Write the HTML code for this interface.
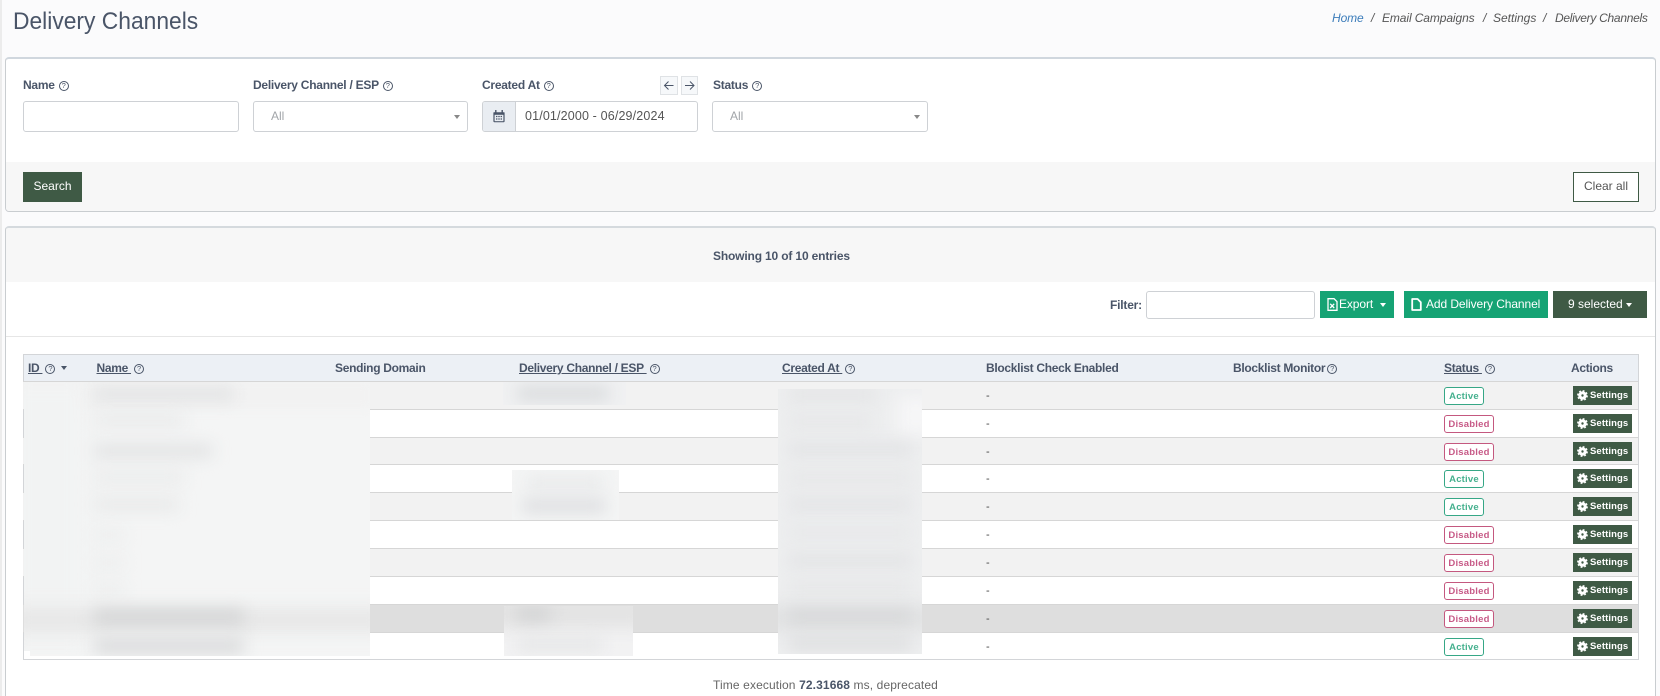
<!DOCTYPE html>
<html lang="en">
<head>
<meta charset="utf-8">
<title>Delivery Channels</title>
<style>
html,body{margin:0;padding:0;width:1660px;height:696px;overflow:hidden;background:#fbfbfc;font-family:"Liberation Sans",sans-serif;color:#4a5568}
*{box-sizing:border-box}
.a{position:absolute}
.t{position:absolute;white-space:nowrap;line-height:16px;height:16px}
.lab{font-weight:bold;font-size:12px;color:#4a5568;top:77px;letter-spacing:-.25px}
.th{font-weight:bold;font-size:12px;color:#4a5568;top:360px;letter-spacing:-.3px}
.th u{text-underline-offset:1px}
.q{display:inline-block;width:10px;height:10px;border:1px solid #4a5568;border-radius:50%;font:normal 7.5px/8px "Liberation Sans",sans-serif;text-align:center;vertical-align:1px;margin-left:4px;letter-spacing:0;text-decoration:none;color:#4a5568}
.th .q{margin-left:3px}
.inp{position:absolute;background:#fff;border:1px solid #ced1d5;border-radius:3px}
.all{font-size:12px;color:#a2a5a9}
.caret{position:absolute;width:0;height:0;border-left:3px solid transparent;border-right:3px solid transparent;border-top:4px solid #888}
.btn{position:absolute;color:#fff;font-size:12px;line-height:27px;text-align:center;white-space:nowrap}
.dk{background:#3f5a45}
.gr{background:#16a374}
.line{position:absolute;left:23px;width:1615px;height:1px;background:#d6d6d6}
.row{position:absolute;left:23px;width:1615px}
.dash{position:absolute;left:986px;font-size:11px;line-height:12px;color:#444}
.bd{position:absolute;left:1444px;height:18px;background:#fff;border-radius:3px;font-size:9.5px;font-weight:bold;line-height:17px;text-align:center;letter-spacing:.2px}
.ac{width:40px;border:1px solid #36a786;color:#45b08e}
.di{width:50px;border:1px solid #c4587f;color:#c75a87}
.st{position:absolute;left:1573px;width:59px;height:19px;background:#3f5a45;color:#fff;font-size:9.5px;font-weight:bold;line-height:20px;white-space:nowrap;padding-left:17px;letter-spacing:.1px}
.st svg{position:absolute;left:4px;top:4px}
.b{position:absolute;filter:blur(8px)}
.ov{position:absolute;overflow:hidden}
</style>
</head>
<body>
<div class="a" style="left:0;top:0;width:2px;height:696px;background:#ececec"></div>

<div class="t" style="left:13px;top:8px;font-size:24px;line-height:28px;height:28px;color:#4a5568;transform:scaleX(.951);transform-origin:left center">Delivery Channels</div>
<div class="t" style="left:1332px;top:10px;font-size:12px;font-style:italic;color:#3b7cba;letter-spacing:-.1px">Home</div>
<div class="t" style="left:1371px;top:10px;font-size:12px;font-style:italic;color:#555">/</div>
<div class="t" style="left:1382px;top:10px;font-size:12px;font-style:italic;color:#555;letter-spacing:-.1px">Email Campaigns</div>
<div class="t" style="left:1483px;top:10px;font-size:12px;font-style:italic;color:#555">/</div>
<div class="t" style="left:1493px;top:10px;font-size:12px;font-style:italic;color:#555">Settings</div>
<div class="t" style="left:1543px;top:10px;font-size:12px;font-style:italic;color:#555">/</div>
<div class="t" style="left:1555px;top:10px;font-size:12px;font-style:italic;color:#555;letter-spacing:-.28px">Delivery Channels</div>

<!-- Search card -->
<div class="a" style="left:5px;top:57px;width:1651px;height:155px;background:#fff;border:1px solid #c9cdd0;border-top:2px solid #d0d7de;border-radius:4px;overflow:hidden">
  <div class="a" style="left:0;top:103px;width:100%;height:50px;background:#f7f7f7"></div>
</div>
<div class="t lab" style="left:23px">Name<span class="q">?</span></div>
<div class="t lab" style="left:253px">Delivery Channel / ESP<span class="q">?</span></div>
<div class="t lab" style="left:482px">Created At<span class="q">?</span></div>
<div class="t lab" style="left:713px">Status<span class="q">?</span></div>

<div class="inp" style="left:23px;top:101px;width:216px;height:31px"></div>
<div class="inp" style="left:253px;top:101px;width:215px;height:31px"></div>
<div class="t all" style="left:271px;top:108px">All</div>
<div class="caret" style="left:454px;top:115px"></div>

<div class="inp" style="left:482px;top:101px;width:216px;height:31px;overflow:hidden"><div class="a" style="left:0;top:0;width:33px;height:29px;background:#e9edf2;border-right:1px solid #ced1d5"></div></div>
<svg class="a" style="left:493px;top:109px" width="12" height="14" viewBox="0 0 12 14"><path d="M1 3.2h10a.6.6 0 0 1 .6.6v8.4a1 1 0 0 1-1 1H1.400a1 1 0 0 1-1-1V3.800a.6.6 0 0 1 .6-.6z" fill="#4a5568"/><rect x="1.600" y="5.800" width="8.800" height="6.400" fill="#e9edf2"/><path d="M2.800 1v3M9.200 1v3" stroke="#4a5568" stroke-width="1.400"/><path d="M3 7.500h1.400M5.300 7.500h1.400M7.600 7.500h1.400M3 10h1.400M5.300 10h1.400M7.600 10h1.400" stroke="#4a5568" stroke-width="1.300"/></svg>
<div class="t" style="left:525px;top:108px;font-size:12.500px;color:#555;letter-spacing:.15px">01/01/2000 - 06/29/2024</div>

<div class="a" style="left:660px;top:76px;width:18px;height:19px;background:#f6f8fa;border:1px solid #dfe2e5"></div>
<div class="a" style="left:681px;top:76px;width:17px;height:19px;background:#f6f8fa;border:1px solid #dfe2e5"></div>
<svg class="a" style="left:663px;top:80px" width="12" height="11" viewBox="0 0 12 11"><path d="M10.500 5.500H1.500M5.500 1.500l-4 4 4 4" fill="none" stroke="#4a5568" stroke-width="1"/></svg>
<svg class="a" style="left:684px;top:80px" width="12" height="11" viewBox="0 0 12 11"><path d="M1 5.500h9M6 1.500l4 4-4 4" fill="none" stroke="#4a5568" stroke-width="1"/></svg>

<div class="inp" style="left:712px;top:101px;width:216px;height:31px"></div>
<div class="t all" style="left:730px;top:108px">All</div>
<div class="caret" style="left:914px;top:115px"></div>

<div class="btn dk" style="left:23px;top:172px;width:59px;height:30px;line-height:29px">Search</div>
<div class="btn" style="left:1573px;top:172px;width:66px;height:30px;line-height:27px;background:#fff;border:1px solid #3f5a45;color:#555">Clear all</div>

<!-- Table card -->
<div class="a" style="left:5px;top:226px;width:1651px;height:470px;background:#fff;border:1px solid #c9cdd0;border-top:2px solid #d5dade;border-bottom:0;border-radius:4px 4px 0 0;overflow:hidden">
  <div class="a" style="left:0;top:0;width:100%;height:54px;background:#f7f7f7"></div>
</div>
<div class="t" style="left:713px;top:248px;font-size:12px;font-weight:bold;color:#4a5568;letter-spacing:-.16px">Showing 10 of 10 entries</div>

<div class="t" style="left:1110px;top:297px;font-size:12px;font-weight:bold;color:#4a5568;letter-spacing:-.2px">Filter:</div>
<div class="inp" style="left:1146px;top:291px;width:169px;height:28px"></div>

<div class="btn gr" style="left:1320px;top:291px;width:74px;height:27px;text-align:left;padding-left:19px;letter-spacing:-.1px">Export</div>
<svg class="a" style="left:1327px;top:298px" width="11" height="13" viewBox="0 0 11 13"><path d="M1 .7h6l3 3v8.600H1z" fill="none" stroke="#fff" stroke-width="1.300"/><path d="M3.200 5.800l4 4.200M7.200 5.800l-4 4.200" stroke="#fff" stroke-width="1.300"/></svg>
<div class="caret" style="left:1380px;top:303px;border-top-color:#fff"></div>
<div class="btn gr" style="left:1404px;top:291px;width:144px;height:27px;text-align:left;padding-left:22px;letter-spacing:-.09px">Add Delivery Channel</div>
<svg class="a" style="left:1411px;top:298px" width="11" height="13" viewBox="0 0 11 13"><path d="M1.200 1h5.400l3.200 3.200v7.800H1.200z" fill="none" stroke="#fff" stroke-width="1.800" stroke-linejoin="round"/></svg>
<div class="btn dk" style="left:1553px;top:291px;width:94px;height:27px;text-align:left;padding-left:15px">9 selected</div>
<div class="caret" style="left:1626px;top:303px;border-top-color:#fff"></div>

<div class="a" style="left:6px;top:336px;width:1649px;height:1px;background:#e6e6e6"></div>

<!-- Table -->
<div class="a" style="left:23px;top:354px;width:1616px;height:306px;border:1px solid #d3d5d8;background:#fff"></div>
<div class="a" style="left:24px;top:355px;width:1614px;height:26px;background:#ecf0f5"></div>
<div class="row" style="top:382px;height:27px;background:#f2f2f2"></div>
<div class="row" style="top:438px;height:26px;background:#f2f2f2"></div>
<div class="row" style="top:493px;height:27px;background:#f2f2f2"></div>
<div class="row" style="top:549px;height:27px;background:#f2f2f2"></div>
<div class="row" style="top:605px;height:27px;background:#dedede"></div>
<div class="line" style="top:381px"></div>
<div class="line" style="top:409px"></div>
<div class="line" style="top:437px"></div>
<div class="line" style="top:464px"></div>
<div class="line" style="top:492px"></div>
<div class="line" style="top:520px"></div>
<div class="line" style="top:548px"></div>
<div class="line" style="top:576px"></div>
<div class="line" style="top:604px"></div>
<div class="line" style="top:632px"></div>

<div class="t th" style="left:28px"><u>ID </u><span class="q">?</span></div>
<div class="caret" style="left:61px;top:366px;border-top-color:#4a5568"></div>
<div class="t th" style="left:96.500px"><u>Name </u><span class="q">?</span></div>
<div class="t th" style="left:335px">Sending Domain</div>
<div class="t th" style="left:519px"><u>Delivery Channel / ESP </u><span class="q">?</span></div>
<div class="t th" style="left:782px"><u>Created At </u><span class="q">?</span></div>
<div class="t th" style="left:986px">Blocklist Check Enabled</div>
<div class="t th" style="left:1233px">Blocklist Monitor<span class="q" style="margin-left:2px">?</span></div>
<div class="t th" style="left:1444px"><u>Status </u><span class="q">?</span></div>
<div class="t th" style="left:1571px">Actions</div>

<!-- blurred redactions -->
<div class="ov" style="left:24px;top:382px;width:346px;height:274px;background:#f4f5f5">
  <div class="a" style="left:0;top:0;width:346px;height:27px;background:#f2f2f2;filter:blur(4px)"></div>
  <div class="b" style="left:-12px;top:0;width:72px;height:270px;background:#f2f3f3"></div>
  <div class="b" style="left:70px;top:6px;width:140px;height:12px;background:#e0e1e2"></div>
  <div class="b" style="left:70px;top:33px;width:90px;height:11px;background:#e8e9e9"></div>
  <div class="b" style="left:70px;top:63px;width:118px;height:12px;background:#dfe0e1"></div>
  <div class="b" style="left:70px;top:90px;width:90px;height:11px;background:#e9eaea"></div>
  <div class="b" style="left:70px;top:117px;width:85px;height:11px;background:#e6e7e7"></div>
  <div class="b" style="left:70px;top:148px;width:30px;height:10px;background:#ebecec"></div>
  <div class="b" style="left:70px;top:176px;width:30px;height:10px;background:#ebecec"></div>
  <div class="b" style="left:70px;top:203px;width:30px;height:10px;background:#ebecec"></div>
  <div class="b" style="left:-12px;top:226px;width:374px;height:24px;background:#e7e7e7"></div>
  <div class="b" style="left:70px;top:228px;width:150px;height:14px;background:#d2d3d4"></div>
  <div class="b" style="left:70px;top:257px;width:150px;height:14px;background:#d7d8d9"></div>
</div>
<div class="a" style="left:24px;top:651px;width:6px;height:5px;background:#fff"></div>

<div class="ov" style="left:503px;top:382px;width:123px;height:23px;background:#f0f1f2">
  <div class="b" style="left:14px;top:5px;width:92px;height:13px;background:#d7d9db"></div>
</div>
<div class="ov" style="left:512px;top:470px;width:107px;height:50px;background:#f4f5f5">
  <div class="b" style="left:14px;top:7px;width:78px;height:12px;background:#e7e8e9"></div>
  <div class="b" style="left:10px;top:30px;width:84px;height:12px;background:#d9dadd"></div>
</div>
<div class="ov" style="left:504px;top:606px;width:129px;height:50px;background:#f2f2f3">
  <div class="b" style="left:-12px;top:-12px;width:154px;height:34px;background:#e3e3e3"></div>
  <div class="b" style="left:12px;top:2px;width:34px;height:12px;background:#cfd0d1"></div>
  <div class="b" style="left:14px;top:33px;width:84px;height:11px;background:#e3e4e5"></div>
</div>
<div class="ov" style="left:778px;top:389px;width:144px;height:265px;background:#eeeff0">
  <div class="b" style="left:10px;top:0;width:90px;height:11px;background:#e1e2e3"></div>
  <div class="b" style="left:10px;top:27px;width:85px;height:11px;background:#e4e5e6"></div>
  <div class="b" style="left:120px;top:8px;width:36px;height:38px;background:#f6f6f7"></div>
  <div class="b" style="left:10px;top:55px;width:124px;height:11px;background:#dfe0e2"></div>
  <div class="b" style="left:10px;top:83px;width:124px;height:11px;background:#e4e5e6"></div>
  <div class="b" style="left:10px;top:110px;width:124px;height:11px;background:#e0e1e3"></div>
  <div class="b" style="left:10px;top:138px;width:124px;height:11px;background:#e5e6e7"></div>
  <div class="b" style="left:10px;top:166px;width:124px;height:11px;background:#dfe0e2"></div>
  <div class="b" style="left:10px;top:193px;width:124px;height:11px;background:#e4e5e6"></div>
  <div class="b" style="left:-12px;top:216px;width:168px;height:26px;background:#e2e3e4"></div>
  <div class="b" style="left:10px;top:221px;width:124px;height:12px;background:#d4d5d6"></div>
  <div class="b" style="left:10px;top:249px;width:124px;height:11px;background:#d9dadb"></div>
</div>

<!-- dashes -->
<div class="dash" style="top:390px">-</div>
<div class="dash" style="top:418px">-</div>
<div class="dash" style="top:446px">-</div>
<div class="dash" style="top:473px">-</div>
<div class="dash" style="top:501px">-</div>
<div class="dash" style="top:529px">-</div>
<div class="dash" style="top:557px">-</div>
<div class="dash" style="top:585px">-</div>
<div class="dash" style="top:613px">-</div>
<div class="dash" style="top:641px">-</div>

<!-- badges -->
<div class="bd ac" style="top:387px">Active</div>
<div class="bd di" style="top:415px">Disabled</div>
<div class="bd di" style="top:443px">Disabled</div>
<div class="bd ac" style="top:470px">Active</div>
<div class="bd ac" style="top:498px">Active</div>
<div class="bd di" style="top:526px">Disabled</div>
<div class="bd di" style="top:554px">Disabled</div>
<div class="bd di" style="top:582px">Disabled</div>
<div class="bd di" style="top:610px">Disabled</div>
<div class="bd ac" style="top:638px">Active</div>

<!-- settings buttons -->
<svg width="0" height="0" style="position:absolute"><defs><symbol id="gear" viewBox="0 0 12 12"><circle cx="6" cy="6" r="3" fill="none" stroke="#fff" stroke-width="3.400"/><circle cx="6" cy="6" r="5" fill="none" stroke="#fff" stroke-width="1.800" stroke-dasharray="2 1.930"/></symbol></defs></svg>
<div class="st" style="top:386px"><svg width="11" height="11"><use href="#gear"/></svg>Settings</div>
<div class="st" style="top:414px"><svg width="11" height="11"><use href="#gear"/></svg>Settings</div>
<div class="st" style="top:442px"><svg width="11" height="11"><use href="#gear"/></svg>Settings</div>
<div class="st" style="top:469px"><svg width="11" height="11"><use href="#gear"/></svg>Settings</div>
<div class="st" style="top:497px"><svg width="11" height="11"><use href="#gear"/></svg>Settings</div>
<div class="st" style="top:525px"><svg width="11" height="11"><use href="#gear"/></svg>Settings</div>
<div class="st" style="top:553px"><svg width="11" height="11"><use href="#gear"/></svg>Settings</div>
<div class="st" style="top:581px"><svg width="11" height="11"><use href="#gear"/></svg>Settings</div>
<div class="st" style="top:609px"><svg width="11" height="11"><use href="#gear"/></svg>Settings</div>
<div class="st" style="top:637px"><svg width="11" height="11"><use href="#gear"/></svg>Settings</div>

<div class="t" style="left:713px;top:677px;font-size:12px;color:#666;letter-spacing:.12px">Time execution <b style="color:#4a5568">72.31668</b> ms, deprecated</div>
</body>
</html>
